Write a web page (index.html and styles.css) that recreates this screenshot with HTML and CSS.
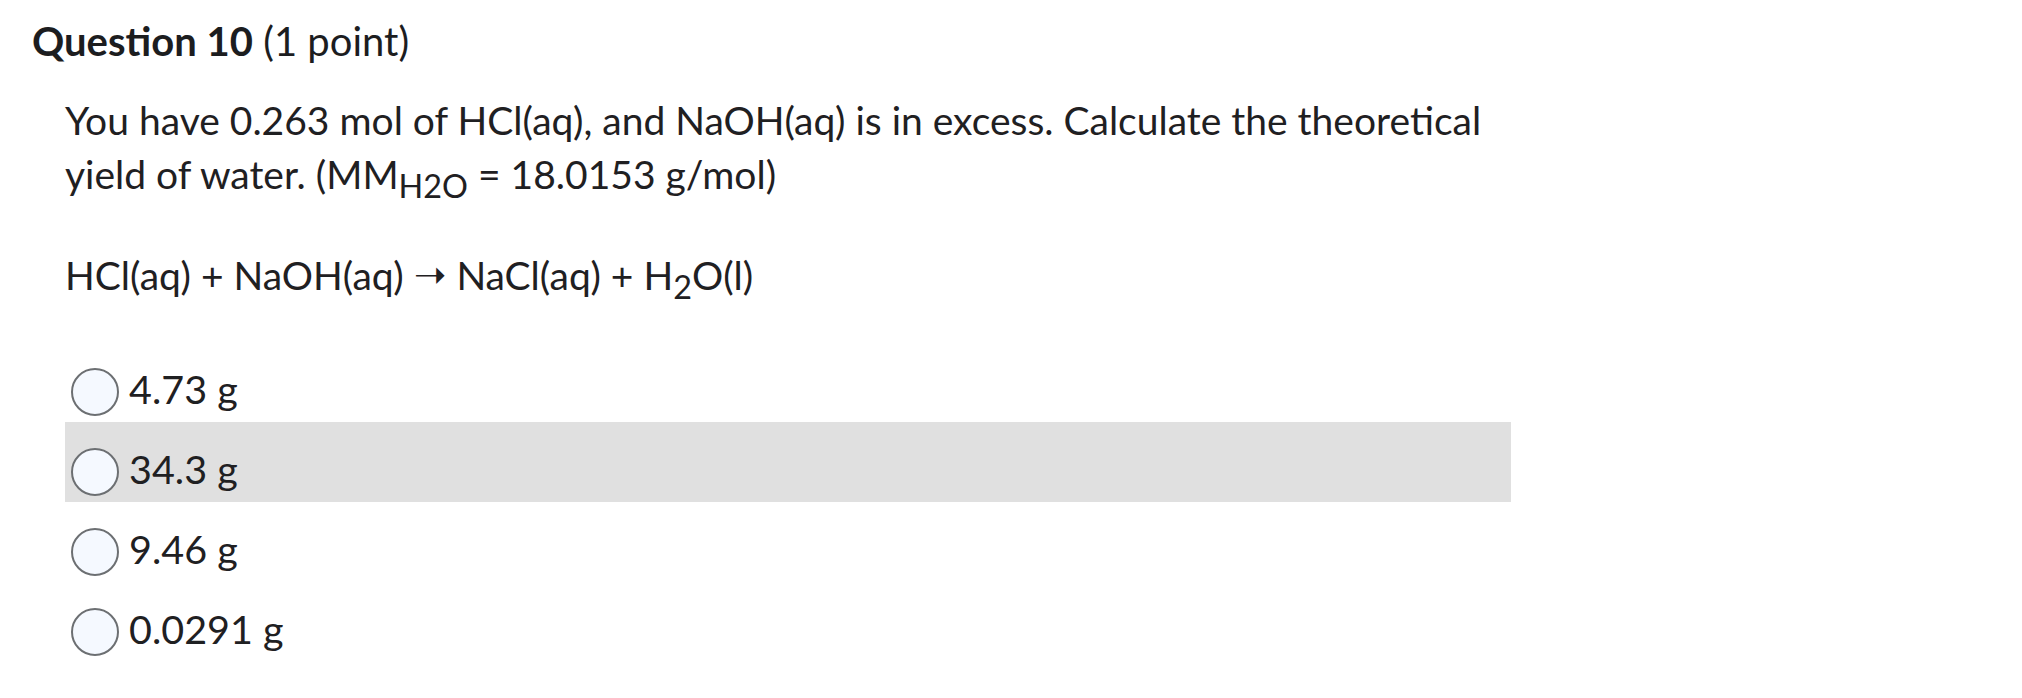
FILE: index.html
```html
<!DOCTYPE html>
<html lang="en">
<head>
<meta charset="utf-8">
<title>Question 10</title>
<link rel="stylesheet" href="styles.css">
</head>
<body>
<div class="page">
  <h2 class="title"><strong>Question 10</strong> (1 point)</h2>
  <div class="question">
    <p class="prompt">You have 0.263 mol of HCl(aq), and NaOH(aq) is in excess. Calculate the theoretical yield of water. (MM<sub>H2O</sub> = 18.0153 g/mol)</p>
    <p class="equation">HCl(aq) + NaOH(aq) <span class="arrow">➝</span> NaCl(aq) + H<sub>2</sub>O(l)</p>
    <ul class="options">
      <li class="option"><span class="radio"></span><span class="label">4.73 g</span></li>
      <li class="option hover"><span class="radio"></span><span class="label">34.3 g</span></li>
      <li class="option"><span class="radio"></span><span class="label">9.46 g</span></li>
      <li class="option"><span class="radio"></span><span class="label">0.0291 g</span></li>
    </ul>
  </div>
</div>
</body>
</html>
```

FILE: styles.css
```css
html, body {
  margin: 0;
  padding: 0;
  background: #ffffff;
}

body {
  font-family: Lato, "Open Sans", "Liberation Sans", sans-serif;
  color: #1f2022;
}

.page {
  display: flex;
  flex-direction: column;
}

.title {
  margin: 0;
  padding: 21px 0 0 32px;
  font-size: 40px;
  line-height: 41px;
  font-weight: 400;
  color: #1c1d1f;
}

.title strong {
  font-weight: 700;
}

.question {
  margin-left: 65px;
  width: 1446px;
}

.prompt,
.equation {
  margin: 0;
  font-size: 39px;
  line-height: 54px;
}

.prompt {
  margin-top: 31px;
}

.equation {
  margin-top: 47px;
}

.arrow {
  font-family: "DejaVu Sans", sans-serif;
  font-size: 1em;
  vertical-align: 0.05em;
  line-height: 0;
}

sub {
  font-size: 0.83em;
  line-height: 0;
  vertical-align: sub;
}

.options {
  list-style: none;
  margin: 40px 0 0;
  padding: 0;
  display: flex;
  flex-direction: column;
}

.option {
  box-sizing: border-box;
  height: 80px;
  padding: 14px 0 0 6px;
  display: flex;
  align-items: center;
}

.option.hover {
  background: #e0e0e0;
}

.radio {
  box-sizing: border-box;
  width: 48px;
  height: 48px;
  margin: 5px 10px 0 0;
  border: 2px solid #6c6f72;
  border-radius: 50%;
  background: #f5f9ff;
  flex: none;
}

.label {
  font-size: 39.5px;
  line-height: 54px;
}
```
